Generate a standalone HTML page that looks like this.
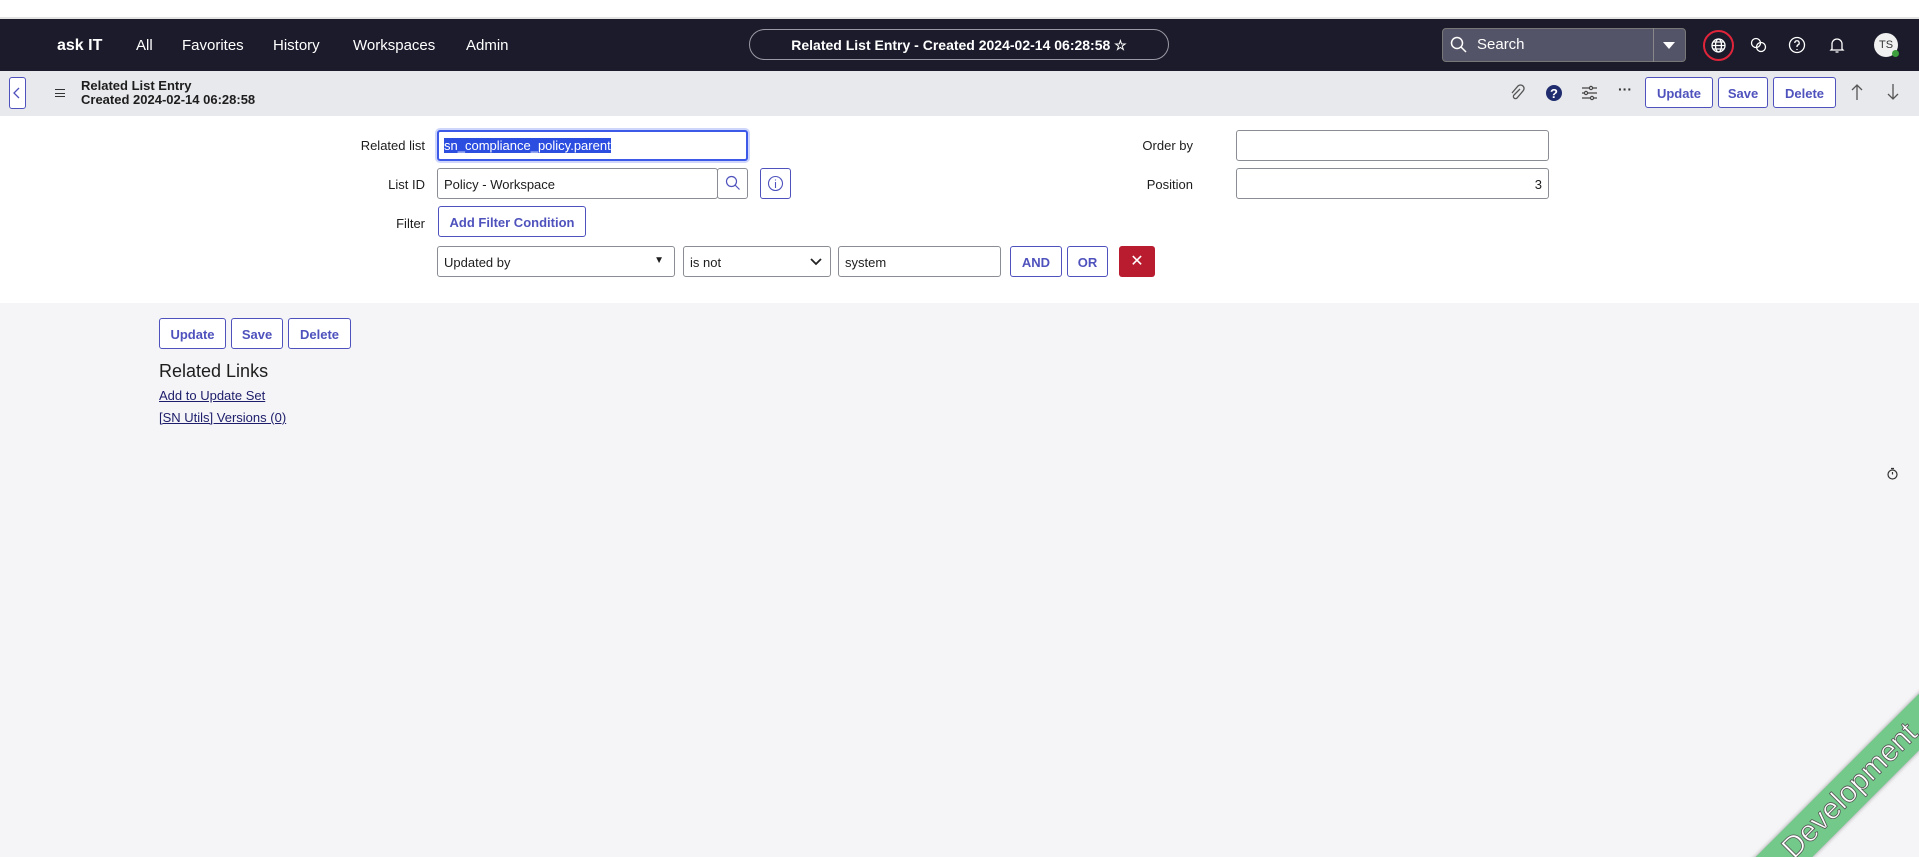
<!DOCTYPE html>
<html style="overflow:hidden;width:1919px;height:857px"><head><meta charset="utf-8"><style>
*{box-sizing:border-box;margin:0;padding:0}
body{width:1919px;height:857px;overflow:hidden;background:#f5f5f7;font-family:"Liberation Sans",sans-serif;position:relative;color:#1d1d1d}
.abs{position:absolute}
.nav{left:0;top:19px;width:1919px;height:52px;background:#1b1b2b}
.nav .t{position:absolute;top:18px;color:#fff;font-size:15px}
.sub{left:0;top:71px;width:1919px;height:45px;background:#e8e9ed}
.form{left:0;top:116px;width:1919px;height:187px;background:#fff}
.inp{position:absolute;height:31px;border:1px solid #8a8d93;border-radius:3px;background:#fff;font-size:13px;padding:8px 6px}
.lbl{position:absolute;font-size:13px;text-align:right;width:200px}
.btn{position:absolute;border:1px solid #4f52bd;border-radius:3px;background:#fff;color:#4f52bd;font-size:13px;font-weight:bold;text-align:center}
a{color:#1d1d6b;font-size:13px;text-decoration:underline}
</style></head><body>
<div class="abs" style="left:0;top:0;width:1919px;height:17px;background:#fff"></div>
<div class="abs" style="left:0;top:17px;width:1919px;height:2px;background:#e3e3e3"></div>
<div class="abs nav">
<span class="t" style="left:57px;font-weight:bold;font-size:16px">ask IT</span>
<span class="t" style="left:136px">All</span>
<span class="t" style="left:182px">Favorites</span>
<span class="t" style="left:273px">History</span>
<span class="t" style="left:353px">Workspaces</span>
<span class="t" style="left:466px">Admin</span>
<div class="abs" style="left:749px;top:10px;width:420px;height:31px;border:1px solid #9a9aa6;border-radius:16px;color:#fff;font-weight:bold;font-size:14px;text-align:center;padding-top:7px">Related List Entry - Created 2024-02-14 06:28:58 &#9734;</div>
<div class="abs" style="left:1442px;top:9px;width:244px;height:34px;background:#545468;border:1px solid #777;border-radius:4px"></div>
<div class="abs" style="left:1653px;top:9px;width:1px;height:34px;background:#888"></div>
<svg class="abs" style="left:1450px;top:17px" width="18" height="18"><circle cx="7" cy="7" r="5.5" stroke="#fff" fill="none" stroke-width="1.5"/><path d="M11 11l5 5" stroke="#fff" stroke-width="1.5"/></svg>
<span class="t" style="left:1477px;top:17px">Search</span>
<div class="abs" style="left:1663px;top:23px;border-left:6px solid transparent;border-right:6px solid transparent;border-top:7px solid #fff"></div>
<div class="abs" style="left:1703px;top:11px;width:31px;height:31px;border:2px solid #e0243a;border-radius:50%"></div>
<svg class="abs" style="left:1710px;top:18px" width="17" height="17" fill="none" stroke="#fff" stroke-width="1.3"><circle cx="8.5" cy="8.5" r="6.5"/><ellipse cx="8.5" cy="8.5" rx="3" ry="6.5"/><path d="M2 8.5h13M3 5h11M3 12h11"/></svg>
<svg class="abs" style="left:1750px;top:18px" width="18" height="17" fill="none" stroke="#fff" stroke-width="1.3"><circle cx="6" cy="6" r="4.5"/><circle cx="11" cy="10" r="4.5"/></svg>
<svg class="abs" style="left:1788px;top:17px" width="18" height="18" fill="none" stroke="#fff" stroke-width="1.3"><circle cx="9" cy="9" r="7.5"/><path d="M6.8 7a2.2 2.2 0 1 1 3 2c-.8.4-.8 1-.8 2M9 13v1"/></svg>
<svg class="abs" style="left:1829px;top:17px" width="16" height="18" fill="none" stroke="#fff" stroke-width="1.3"><path d="M3 13V8a5 5 0 0 1 10 0v5l1 1H2zM6.5 16h3"/></svg>
<div class="abs" style="left:1874px;top:14px;width:24px;height:24px;border-radius:50%;background:#f0f0f0;color:#333;font-size:11px;text-align:center;padding-top:6px">TS</div>
<div class="abs" style="left:1892px;top:31px;width:7px;height:7px;border-radius:50%;background:#3c9e3c"></div>
</div>
<div class="abs sub">
<div class="abs" style="left:9px;top:6px;width:17px;height:32px;border:1px solid #4f52bd;border-radius:3px;background:#fff"></div>
<svg class="abs" style="left:12px;top:15px" width="10" height="14"><path d="M7 2L2 7l5 5" stroke="#4f52bd" fill="none" stroke-width="1.3"/></svg>
<div class="abs" style="left:55px;top:18px;width:10px;height:8px;border-top:1.5px solid #333;border-bottom:1.5px solid #333"></div>
<div class="abs" style="left:55px;top:21.5px;width:10px;height:1.5px;background:#333"></div>
<div class="abs" style="left:81px;top:8px;font-size:13px;font-weight:bold;line-height:14px">Related List Entry<br>Created 2024-02-14 06:28:58</div>
<svg class="abs" style="left:1509px;top:13px" width="16" height="18" fill="none" stroke="#555" stroke-width="1.3"><path d="M11 5l-6 6a2 2 0 0 0 3 3l6-7a3.5 3.5 0 0 0-5-5L3 9"/></svg>
<svg class="abs" style="left:1545px;top:13px" width="18" height="18"><circle cx="9" cy="9" r="8" fill="#1f2c6e"/><text x="9" y="14" fill="#fff" font-size="13" font-weight="bold" text-anchor="middle" font-family="Liberation Sans">?</text></svg>
<svg class="abs" style="left:1581px;top:14px" width="17" height="16" fill="none" stroke="#444" stroke-width="1.2"><path d="M1 3h15M1 8h15M1 13h15"/><circle cx="10" cy="3" r="1.6" fill="#e8e9ed"/><circle cx="5" cy="8" r="1.6" fill="#e8e9ed"/><circle cx="11" cy="13" r="1.6" fill="#e8e9ed"/></svg>
<div class="abs" style="left:1618px;top:10px;font-size:14px;font-weight:bold;color:#333">···</div>
<div class="btn" style="left:1645px;top:6px;width:68px;height:31px;padding-top:8px">Update</div>
<div class="btn" style="left:1718px;top:6px;width:50px;height:31px;padding-top:8px">Save</div>
<div class="btn" style="left:1773px;top:6px;width:63px;height:31px;padding-top:8px">Delete</div>
<svg class="abs" style="left:1850px;top:12px" width="14" height="18" fill="none" stroke="#555" stroke-width="1.3"><path d="M7 17V2M2 7l5-5 5 5"/></svg>
<svg class="abs" style="left:1886px;top:12px" width="14" height="18" fill="none" stroke="#555" stroke-width="1.3"><path d="M7 1v15M2 11l5 5 5-5"/></svg>
</div>
<div class="abs form">
<div class="lbl" style="left:225px;top:22px">Related list</div>
<div class="inp" style="left:437px;top:14px;width:311px;border:2px solid #3c59e8;box-shadow:0 0 0 2px #cfd6fb;padding:6px 5px"><span style="background:#2b4ee0;color:#fff">sn_compliance_policy.parent</span></div>
<div class="lbl" style="left:225px;top:61px">List ID</div>
<div class="inp" style="left:437px;top:52px;width:281px">Policy - Workspace</div>
<div class="inp" style="left:717px;top:52px;width:31px"></div>
<svg class="abs" style="left:725px;top:59px" width="16" height="16" fill="none" stroke="#4f52bd" stroke-width="1.2"><circle cx="6.5" cy="6.5" r="5"/><path d="M10 10l4.5 4.5"/></svg>
<div class="btn" style="left:760px;top:52px;width:31px;height:31px"></div>
<svg class="abs" style="left:767px;top:59px" width="17" height="17" fill="none" stroke="#4f52bd" stroke-width="1.1"><circle cx="8.5" cy="8.5" r="7"/><path d="M8.5 7v6M8.5 4.5v1"/></svg>
<div class="lbl" style="left:225px;top:100px">Filter</div>
<div class="btn" style="left:438px;top:90px;width:148px;height:31px;padding-top:8px">Add Filter Condition</div>
<div class="inp" style="left:437px;top:130px;width:238px">Updated by<span style="position:absolute;right:10px;font-size:10px">&#9660;</span></div>
<div class="inp" style="left:683px;top:130px;width:148px">is not<svg style="position:absolute;right:8px;top:11px" width="12" height="8"><path d="M1 1l5 5 5-5" stroke="#222" fill="none" stroke-width="1.8"/></svg></div>
<div class="inp" style="left:838px;top:130px;width:163px">system</div>
<div class="btn" style="left:1010px;top:130px;width:52px;height:31px;padding-top:8px">AND</div>
<div class="btn" style="left:1067px;top:130px;width:41px;height:31px;padding-top:8px">OR</div>
<div class="abs" style="left:1119px;top:130px;width:36px;height:31px;background:#b91c2f;border-radius:3px;color:#fff;text-align:center;font-size:16px;padding-top:5px">✕</div>
<div class="lbl" style="left:993px;top:22px">Order by</div>
<div class="inp" style="left:1236px;top:14px;width:313px"></div>
<div class="lbl" style="left:993px;top:61px">Position</div>
<div class="inp" style="left:1236px;top:52px;width:313px;text-align:right">3</div>
</div>
<div class="btn" style="left:159px;top:318px;width:67px;height:31px;padding-top:8px">Update</div>
<div class="btn" style="left:231px;top:318px;width:52px;height:31px;padding-top:8px">Save</div>
<div class="btn" style="left:288px;top:318px;width:63px;height:31px;padding-top:8px">Delete</div>
<div class="abs" style="left:159px;top:361px;font-size:18px">Related Links</div>
<a class="abs" style="left:159px;top:388px">Add to Update Set</a>
<a class="abs" style="left:159px;top:410px">[SN Utils] Versions (0)</a>
<svg class="abs" style="left:1886px;top:467px" width="13" height="13" fill="none" stroke="#333" stroke-width="1.2"><circle cx="6.5" cy="7.5" r="4.5"/><path d="M6.5 7.5V5M5 1.5h3"/></svg>
<div class="abs" style="left:1619px;top:557px;width:300px;height:300px;overflow:hidden">
<div class="abs" style="left:31px;top:214px;width:400px;height:40px;background:#72c989;transform:rotate(-45deg);box-shadow:0 0 4px rgba(0,0,0,.4);color:#fff;font-size:30px;text-align:center;line-height:40px;-webkit-text-stroke:0.8px #555">Development</div>
</div>
</body></html>
